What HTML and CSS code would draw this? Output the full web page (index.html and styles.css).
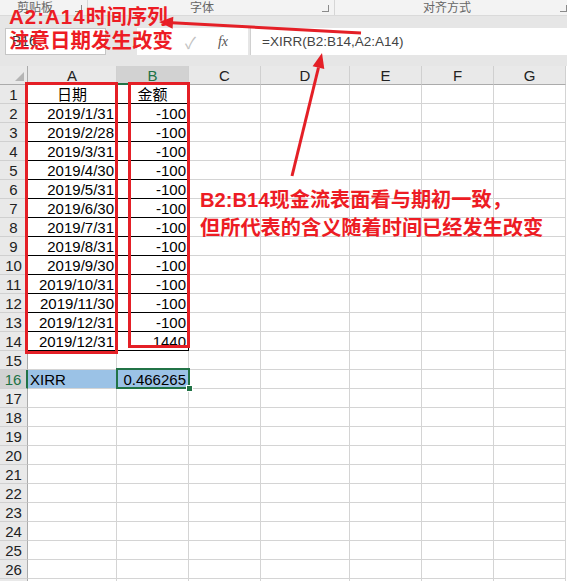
FILE: index.html
```html
<!DOCTYPE html>
<html lang="zh-CN">
<head>
    <meta charset="UTF-8">
    <meta name="viewport" content="width=device-width, initial-scale=1.0">
    <title>XIRR 示例</title>
    <link rel="stylesheet" href="styles.css">
</head>
<body>
    <!-- ribbon bottom: group labels -->
    <div class="ribbon">
        <div class="group g-clip"><span class="glabel">剪贴板</span><span class="launch"></span></div>
        <div class="group g-font"><span class="glabel">字体</span><span class="launch"></span></div>
        <div class="group g-align"><span class="glabel">对齐方式</span><span class="launch"></span></div>
    </div>
    <div class="band"></div>

    <!-- formula bar -->
    <div class="fbar">
        <div class="namebox">B16</div>
        <div class="fbtns">
            <span class="ok">✓</span>
            <span class="fx">fx</span>
        </div>
        <div class="formula">=XIRR(B2:B14,A2:A14)</div>
    </div>
    <div class="band2"></div>

    <!-- worksheet -->
    <div class="sheet">
        <div class="corner"><span class="tri"></span></div>
        <div class="ch">A</div><div class="ch sel">B</div><div class="ch">C</div><div class="ch">D</div><div class="ch">E</div><div class="ch">F</div><div class="ch">G</div>

        <div class="rh">1</div><div class="c bk ctr">日期</div><div class="c bk ctr">金额</div><div class="c"></div><div class="c"></div><div class="c"></div><div class="c"></div><div class="c"></div>
        <div class="rh">2</div><div class="c bk r">2019/1/31</div><div class="c bk r">-100</div><div class="c"></div><div class="c"></div><div class="c"></div><div class="c"></div><div class="c"></div>
        <div class="rh">3</div><div class="c bk r">2019/2/28</div><div class="c bk r">-100</div><div class="c"></div><div class="c"></div><div class="c"></div><div class="c"></div><div class="c"></div>
        <div class="rh">4</div><div class="c bk r">2019/3/31</div><div class="c bk r">-100</div><div class="c"></div><div class="c"></div><div class="c"></div><div class="c"></div><div class="c"></div>
        <div class="rh">5</div><div class="c bk r">2019/4/30</div><div class="c bk r">-100</div><div class="c"></div><div class="c"></div><div class="c"></div><div class="c"></div><div class="c"></div>
        <div class="rh">6</div><div class="c bk r">2019/5/31</div><div class="c bk r">-100</div><div class="c"></div><div class="c"></div><div class="c"></div><div class="c"></div><div class="c"></div>
        <div class="rh">7</div><div class="c bk r">2019/6/30</div><div class="c bk r">-100</div><div class="c"></div><div class="c"></div><div class="c"></div><div class="c"></div><div class="c"></div>
        <div class="rh">8</div><div class="c bk r">2019/7/31</div><div class="c bk r">-100</div><div class="c"></div><div class="c"></div><div class="c"></div><div class="c"></div><div class="c"></div>
        <div class="rh">9</div><div class="c bk r">2019/8/31</div><div class="c bk r">-100</div><div class="c"></div><div class="c"></div><div class="c"></div><div class="c"></div><div class="c"></div>
        <div class="rh">10</div><div class="c bk r">2019/9/30</div><div class="c bk r">-100</div><div class="c"></div><div class="c"></div><div class="c"></div><div class="c"></div><div class="c"></div>
        <div class="rh">11</div><div class="c bk r">2019/10/31</div><div class="c bk r">-100</div><div class="c"></div><div class="c"></div><div class="c"></div><div class="c"></div><div class="c"></div>
        <div class="rh">12</div><div class="c bk r">2019/11/30</div><div class="c bk r">-100</div><div class="c"></div><div class="c"></div><div class="c"></div><div class="c"></div><div class="c"></div>
        <div class="rh">13</div><div class="c bk r">2019/12/31</div><div class="c bk r">-100</div><div class="c"></div><div class="c"></div><div class="c"></div><div class="c"></div><div class="c"></div>
        <div class="rh">14</div><div class="c bk r">2019/12/31</div><div class="c bk r">1440</div><div class="c"></div><div class="c"></div><div class="c"></div><div class="c"></div><div class="c"></div>
        <div class="rh">15</div><div class="c"></div><div class="c"></div><div class="c"></div><div class="c"></div><div class="c"></div><div class="c"></div><div class="c"></div>
        <div class="rh sel">16</div><div class="c hl">XIRR</div><div class="c hl r active">0.466265</div><div class="c"></div><div class="c"></div><div class="c"></div><div class="c"></div><div class="c"></div>
        <div class="rh">17</div><div class="c"></div><div class="c"></div><div class="c"></div><div class="c"></div><div class="c"></div><div class="c"></div><div class="c"></div>
        <div class="rh">18</div><div class="c"></div><div class="c"></div><div class="c"></div><div class="c"></div><div class="c"></div><div class="c"></div><div class="c"></div>
        <div class="rh">19</div><div class="c"></div><div class="c"></div><div class="c"></div><div class="c"></div><div class="c"></div><div class="c"></div><div class="c"></div>
        <div class="rh">20</div><div class="c"></div><div class="c"></div><div class="c"></div><div class="c"></div><div class="c"></div><div class="c"></div><div class="c"></div>
        <div class="rh">21</div><div class="c"></div><div class="c"></div><div class="c"></div><div class="c"></div><div class="c"></div><div class="c"></div><div class="c"></div>
        <div class="rh">22</div><div class="c"></div><div class="c"></div><div class="c"></div><div class="c"></div><div class="c"></div><div class="c"></div><div class="c"></div>
        <div class="rh">23</div><div class="c"></div><div class="c"></div><div class="c"></div><div class="c"></div><div class="c"></div><div class="c"></div><div class="c"></div>
        <div class="rh">24</div><div class="c"></div><div class="c"></div><div class="c"></div><div class="c"></div><div class="c"></div><div class="c"></div><div class="c"></div>
        <div class="rh">25</div><div class="c"></div><div class="c"></div><div class="c"></div><div class="c"></div><div class="c"></div><div class="c"></div><div class="c"></div>
        <div class="rh">26</div><div class="c"></div><div class="c"></div><div class="c"></div><div class="c"></div><div class="c"></div><div class="c"></div><div class="c"></div>
        <div class="rh">27</div><div class="c"></div><div class="c"></div><div class="c"></div><div class="c"></div><div class="c"></div><div class="c"></div><div class="c"></div>
    </div>

    <!-- annotations drawn over the sheet -->
    <div class="box box-a"></div>
    <div class="box box-b"></div>

    <svg class="arrows" width="567" height="581" viewBox="0 0 567 581">
        <line x1="361" y1="33" x2="172" y2="22.7" />
        <polygon points="159,22 173.3,16.8 172.6,28.7" />
        <line x1="292" y1="176" x2="318.5" y2="67.5" />
        <polygon points="322,53 324.3,69 312.6,66.2" />
    </svg>

    <div class="note note-a"><span class="latin">A2:A14</span>时间序列<br>注意日期发生改变</div>
    <div class="note note-b">B2:B14现金流表面看与期初一致，<br>但所代表的含义随着时间已经发生改变</div>
</body>
</html>
```

FILE: styles.css
```css
html, body {
    height: 581px;
    overflow: hidden;
}

body {
    margin: 0;
    position: relative;
    font-family: "Liberation Sans", "Noto Sans CJK SC", sans-serif;
    background-color: #e6e6e6;
    color: #000;
}

/* ribbon group labels */
.ribbon {
    display: flex;
    height: 16px;
    background-color: #f3f3f3;
    border-bottom: 1px solid #dadada;
    box-sizing: border-box;
}

.group {
    position: relative;
    height: 15px;
    border-right: 1px solid #d6d6d6;
    box-sizing: border-box;
    font-family: "Noto Sans CJK SC", sans-serif;
    font-size: 12px;
    line-height: 14px;
    color: #666;
}

.g-clip { width: 88px; padding-left: 17px; }
.g-font { width: 247px; padding-left: 102px; }
.g-align { flex: 1; padding-left: 88px; border-right: none; }

.launch {
    position: absolute;
    right: 5px;
    top: 5px;
    width: 6px;
    height: 6px;
    border-right: 1px solid #8a8a8a;
    border-bottom: 1px solid #8a8a8a;
}

.g-align .launch { right: 0; }

.band {
    height: 12px;
}

/* formula bar */
.fbar {
    display: flex;
    height: 27px;
}

.namebox {
    margin-left: 5px;
    width: 101px;
    background-color: #fff;
    border: 1px solid #c6c6c6;
    box-sizing: border-box;
    font-size: 14px;
    line-height: 25px;
    padding-left: 6px;
    color: #333;
}

.fbtns {
    margin-left: 31px;
    width: 111px;
    background-color: #fff;
    display: flex;
    align-items: center;
}

.ok {
    margin-left: 48px;
    color: #c2c2c2;
    font-size: 16px;
}

.fx {
    margin-left: 22px;
    font-family: "Liberation Serif", serif;
    font-style: italic;
    font-size: 14px;
    color: #555;
}

.formula {
    flex: 1;
    margin-left: 2px;
    background-color: #fff;
    border-left: 1px solid #d0d0d0;
    padding-left: 11px;
    font-size: 13.5px;
    line-height: 27px;
    color: #444;
}

.band2 {
    height: 11px;
}

/* worksheet grid */
.sheet {
    display: grid;
    grid-template-columns: 28px 89px 72px 72px 89px 72px 72px 72px;
    grid-auto-rows: 19px;
    background-color: #fff;
    font-size: 15px;
}

.corner,
.ch,
.rh {
    background-color: #e9e9e9;
    box-sizing: border-box;
    color: #222;
}

.corner {
    position: relative;
    border-right: 1px solid #ababab;
    border-bottom: 1px solid #ababab;
}

.tri {
    position: absolute;
    right: 3px;
    bottom: 3px;
    width: 0;
    height: 0;
    border-left: 9px solid transparent;
    border-bottom: 9px solid #b5b5b5;
}

.ch {
    border-right: 1px solid #d0d0d0;
    border-bottom: 1px solid #ababab;
    text-align: center;
    line-height: 20px;
}

.rh {
    border-right: 1px solid #ababab;
    border-bottom: 1px solid #d0d0d0;
    text-align: center;
    line-height: 20px;
}

.ch.sel,
.rh.sel {
    background-color: #d2d2d2;
    color: #217346;
}

.ch.sel {
    border-bottom: 2px solid #217346;
}

.rh.sel {
    border-right: 2px solid #217346;
}

.c {
    border-right: 1px solid #d4d4d4;
    border-bottom: 1px solid #d4d4d4;
    box-sizing: border-box;
    line-height: 20px;
    padding: 0 2px;
    white-space: nowrap;
}

.c.bk {
    border-color: #000;
}

.r { text-align: right; }
.ctr { text-align: center; }

.hl {
    background-color: #9bc2e6;
}

.active {
    position: relative;
}

.active::after {
    content: "";
    position: absolute;
    left: -1px;
    top: -2px;
    right: -2px;
    bottom: -1px;
    border: 2px solid #217346;
}

.active::before {
    content: "";
    position: absolute;
    right: -5px;
    bottom: -4px;
    width: 5px;
    height: 5px;
    background-color: #217346;
    border: 1px solid #fff;
    z-index: 1;
}

/* red marks */
.box {
    position: absolute;
    border: 3px solid #e41f26;
    box-sizing: border-box;
}

.box-a {
    left: 25px;
    top: 82px;
    width: 93px;
    height: 272px;
}

.box-b {
    left: 128px;
    top: 82px;
    width: 62px;
    height: 266px;
}

.arrows {
    position: absolute;
    left: 0;
    top: 0;
    pointer-events: none;
}

.arrows line {
    stroke: #e41f26;
    stroke-width: 3;
}

.arrows polygon {
    fill: #e41f26;
}

.note {
    position: absolute;
    font-family: "Liberation Sans", "Noto Sans CJK SC", sans-serif;
    font-weight: bold;
    color: #ed1c24;
    white-space: nowrap;
}

.note-a {
    left: 9px;
    top: 5px;
    font-size: 20.5px;
    line-height: 24px;
}

.note-a .latin {
    letter-spacing: 1px;
}

.note-b {
    left: 200px;
    top: 186px;
    font-size: 20.2px;
    line-height: 28px;
}
```
